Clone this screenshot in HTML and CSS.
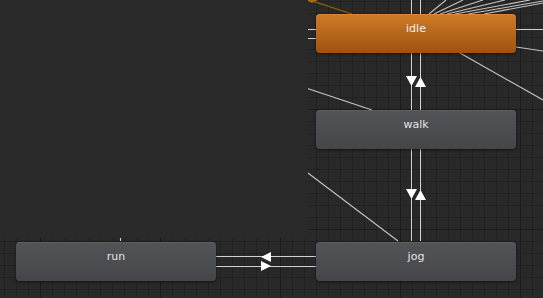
FILE: index.html
```html
<!DOCTYPE html>
<html lang="en">
<head>
    <meta charset="UTF-8">
    <title>Animator - Base Layer</title>
    <link rel="stylesheet" href="styles.css">
</head>
<body>
    <div id="graph">
        <!-- transitions -->
        <svg class="links" width="543" height="298" viewBox="0 0 543 298">
            <path class="entry" d="M300 -3 L352 14"/>
            <polygon class="entry-head" points="306,0 318,0 312,3"/>
            <g class="straight">
                <line x1="411.5" y1="0" x2="411.5" y2="241"/>
                <line x1="420.5" y1="0" x2="420.5" y2="241"/>
                <line x1="216" y1="256.5" x2="316" y2="256.5"/>
                <line x1="216" y1="266.5" x2="316" y2="266.5"/>
                <line x1="300" y1="29.5" x2="316" y2="29.5"/>
                <line x1="300" y1="38.5" x2="316" y2="38.5"/>
                <line x1="516" y1="29.5" x2="543" y2="29.5"/>
                <line x1="120.5" y1="228" x2="120.5" y2="241"/>
            </g>
            <g class="diag">
                <line x1="429" y1="14" x2="446" y2="0"/>
                <line x1="434" y1="14" x2="463" y2="0"/>
                <line x1="440" y1="14" x2="483" y2="0"/>
                <line x1="447" y1="14" x2="505" y2="0"/>
                <line x1="455" y1="14" x2="530" y2="0"/>
                <line x1="468" y1="14" x2="543" y2="1"/>
                <line x1="484" y1="14" x2="543" y2="3"/>
                <line x1="516" y1="47" x2="543" y2="51"/>
                <line x1="460" y1="53" x2="543" y2="100"/>
                <line x1="300" y1="86" x2="372" y2="110"/>
                <line x1="300" y1="167" x2="398" y2="241"/>
            </g>
            <g class="heads">
                <polygon points="406,76 417,76 411.5,86"/>
                <polygon points="415,87 426,87 420.5,77"/>
                <polygon points="406,189 417,189 411.5,199"/>
                <polygon points="415,200 426,200 420.5,190"/>
                <polygon points="271,252 271,262 261,257"/>
                <polygon points="261,261 261,271 271,266"/>
            </g>
        </svg>
        <div class="blank"></div>

        <div class="node default idle">idle</div>
        <div class="node walk">walk</div>
        <div class="node jog">jog</div>
        <div class="node run">run</div>
    </div>
</body>
</html>
```

FILE: styles.css
```css
body{
    margin: 0;
    background-color: #282828;
    font-family: "DejaVu Sans", Verdana, sans-serif;
}
#graph{
    position: relative;
    width: 543px;
    height: 298px;
    overflow: hidden;
    background-color: #292929;
    background-image:
        linear-gradient(90deg, #1c1c1c 1px, transparent 1px),
        linear-gradient(#1c1c1c 1px, transparent 1px),
        linear-gradient(90deg, #222 1px, transparent 1px),
        linear-gradient(#222 1px, transparent 1px);
    background-size: 120px 120px, 120px 120px, 12px 12px, 12px 12px;
    background-position: 40px 109px, 40px 109px, 4px 1px, 4px 1px;
}
/* part of the view that was not repainted */
.blank{
    position: absolute;
    left: 0;
    top: 0;
    width: 308px;
    height: 238px;
    background-color: #2a2a2a;
}
.links{
    position: absolute;
    left: 0;
    top: 0;
}
.links .straight line{
    stroke: #d2d2d2;
    stroke-width: 1;
    shape-rendering: crispEdges;
}
.links .diag line{
    stroke: #c4c4c4;
    stroke-width: 1.1;
}
.links .heads polygon{
    fill: #fff;
}
.entry{
    stroke: #94600f;
    stroke-width: 1.3;
    fill: none;
}
.entry-head{
    fill: #a86a12;
}

/* state nodes */
.node{
    position: absolute;
    width: 200px;
    height: 39px;
    box-sizing: border-box;
    padding-top: 7px;
    border-radius: 4px;
    background: linear-gradient(#525458, #44464a);
    box-shadow: 0 1px 3px rgba(0, 0, 0, 0.55), inset 0 1px 0 rgba(255, 255, 255, 0.07);
    color: #e4e4e4;
    font-size: 11px;
    line-height: 16px;
    text-align: center;
}
.node.default{
    background: linear-gradient(#cf7b27, #a0520f);
    box-shadow: 0 1px 3px rgba(0, 0, 0, 0.55), inset 0 1px 0 rgba(255, 220, 170, 0.15);
    color: #f2f2f2;
}
.idle{ left: 316px; top: 14px; }
.walk{ left: 316px; top: 110px; }
.jog{ left: 316px; top: 242px; }
.run{ left: 16px; top: 242px; }
```
